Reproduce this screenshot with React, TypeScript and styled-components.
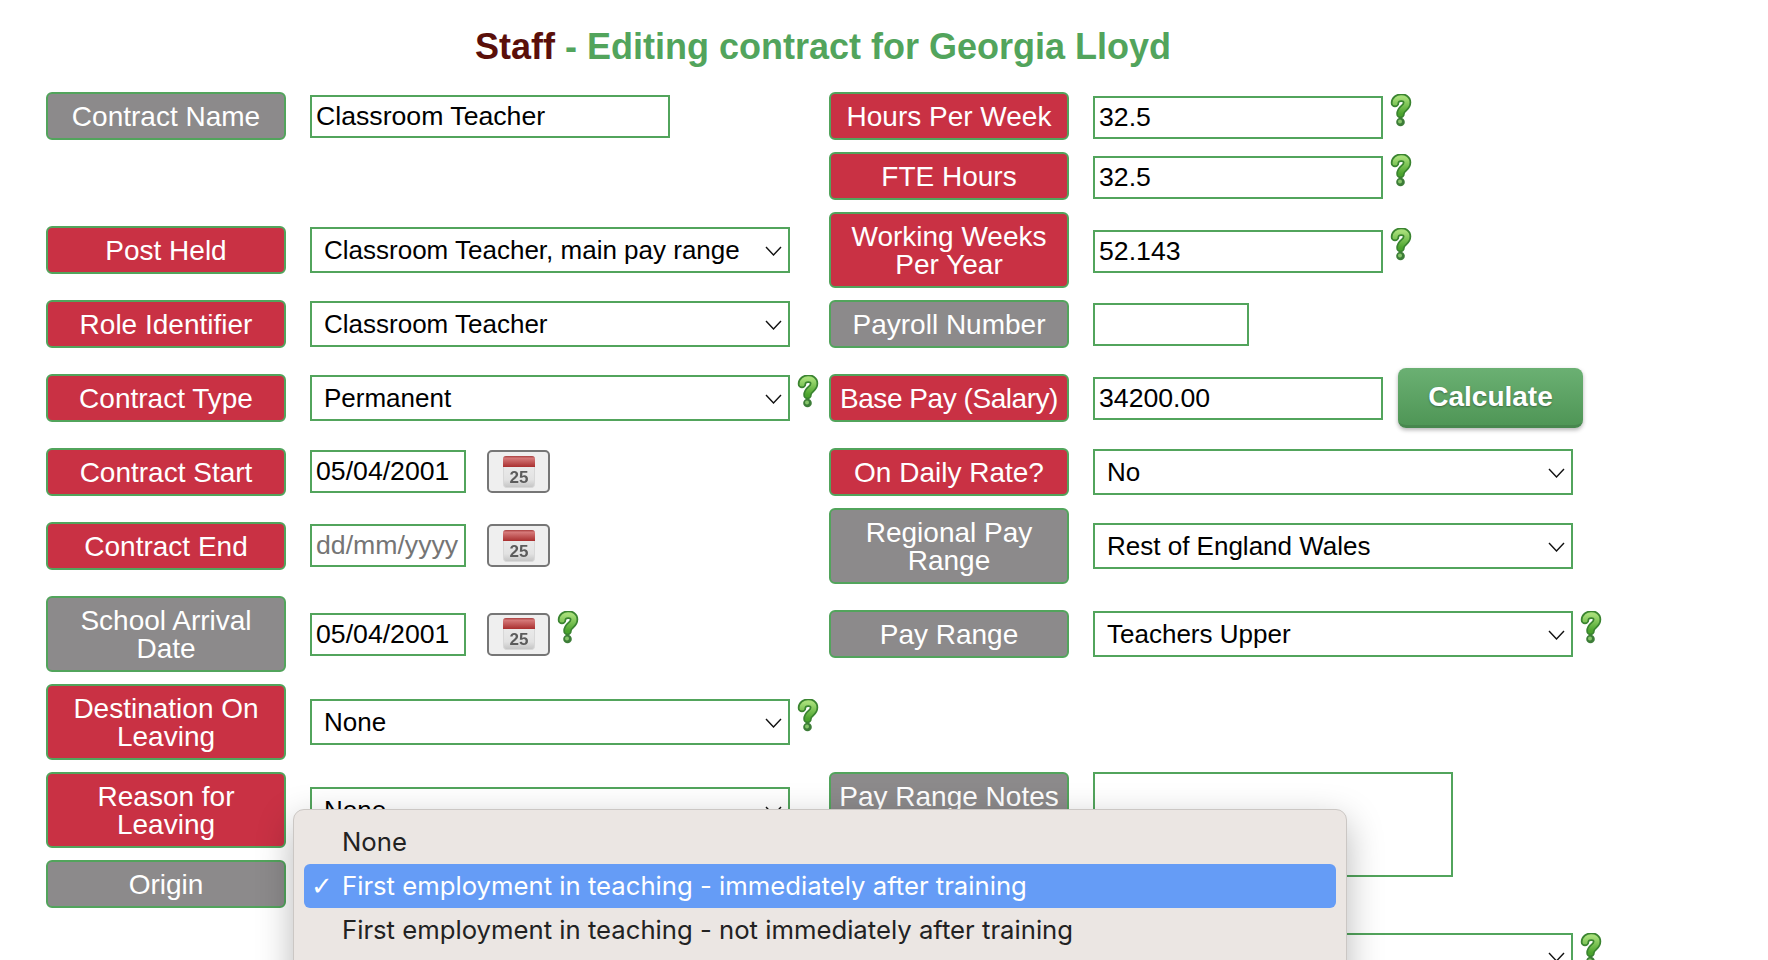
import styled, { createGlobalStyle } from 'styled-components'

const GlobalStyle = createGlobalStyle`
html, body {
  margin: 0;
  padding: 0;
  height: 960px;
  overflow: hidden;
  background: #fff;
  font-family: "Liberation Sans", Arial, sans-serif;
}
`

const green = '#52a45c'

const HelpIcon = ({ lift = 0 }: { lift?: number }) => (
  <HelpMark $lift={lift} width="22" height="33" viewBox="0 0 22 33">
    <defs>
      <linearGradient id="helpFill" x1="0" y1="0" x2="0" y2="1">
        <stop offset="0" stopColor="#a6de78" />
        <stop offset="1" stopColor="#4aa32c" />
      </linearGradient>
    </defs>
    <path d="M5 9C5 2.500 17 1.500 17 8.500c0 6-6.500 5.500-6.500 11.500" fill="none" stroke="#3a8430" strokeWidth="8.500" strokeLinecap="round" />
    <path d="M5 9C5 2.500 17 1.500 17 8.500c0 6-6.500 5.500-6.500 11.500" fill="none" stroke="url(#helpFill)" strokeWidth="5" strokeLinecap="round" />
    <circle cx="10.500" cy="28" r="4.300" fill="#3d7d38" />
    <circle cx="10" cy="27.500" r="2" fill="#86c56a" />
  </HelpMark>
)

const CalendarIcon = () => (
  <svg width="32" height="32" viewBox="0 0 32 32">
    <defs>
      <linearGradient id="calTop" x1="0" y1="0" x2="0" y2="1">
        <stop offset="0" stopColor="#a83d3d" />
        <stop offset="0.2" stopColor="#d67a7a" />
        <stop offset="1" stopColor="#a92f2f" />
      </linearGradient>
      <linearGradient id="calBody" x1="0" y1="0" x2="0" y2="1">
        <stop offset="0" stopColor="#f0f0f0" />
        <stop offset="0.75" stopColor="#e2e2e2" />
        <stop offset="1" stopColor="#c4c4c4" />
      </linearGradient>
      <filter id="calBlur">
        <feGaussianBlur stdDeviation="0.45" />
      </filter>
    </defs>
    <rect x="0.500" y="0.500" width="31" height="31" rx="3" fill="url(#calBody)" stroke="#d8d8d8" />
    <path d="M0 3a3 3 0 0 1 3-3h26a3 3 0 0 1 3 3V11H0z" fill="url(#calTop)" />
    <text x="16" y="27" textAnchor="middle" fontFamily='"Liberation Sans", sans-serif' fontWeight="700" fontSize="17" fill="#5c5c5c" filter="url(#calBlur)">25</text>
  </svg>
)

const Chevron = () => (
  <ChevronMark width="17" height="10" viewBox="0 0 17 10">
    <polyline points="1,1 8.500,9 16,1" fill="none" stroke="#111" strokeWidth="1.400" />
  </ChevronMark>
)

const SelectBox = ({ value = '' }: { value?: string }) => (
  <SelectWrap>
    <Select defaultValue={value}>
      <option value={value}>{value}</option>
    </Select>
    <Chevron />
  </SelectWrap>
)

const DatePicker = () => (
  <CalendarButton type="button">
    <CalendarIcon />
  </CalendarButton>
)

export default function App() {
  return (
    <Page>
      <GlobalStyle />
      <Title>
        <span>Staff</span> - Editing contract for Georgia Lloyd
      </Title>
      <FormGrid>
        <Label>Contract Name</Label>
        <Field><TextInput $width={360} defaultValue="Classroom Teacher" /></Field>
        <Label $required>Hours Per Week</Label>
        <LowField><TextInput $width={290} defaultValue="32.5" /><HelpIcon lift={2} /></LowField>

        <div />
        <div />
        <Label $required>FTE Hours</Label>
        <LowField><TextInput $width={290} defaultValue="32.5" /><HelpIcon lift={2} /></LowField>

        <Label $required>Post Held</Label>
        <Field><SelectBox value="Classroom Teacher, main pay range" /></Field>
        <Label $required>Working Weeks<br />Per Year</Label>
        <LowField><TextInput $width={290} defaultValue="52.143" /><HelpIcon lift={2} /></LowField>

        <Label $required>Role Identifier</Label>
        <Field><SelectBox value="Classroom Teacher" /></Field>
        <Label>Payroll Number</Label>
        <Field><TextInput $width={156} /></Field>

        <Label $required>Contract Type</Label>
        <Field><SelectBox value="Permanent" /><HelpIcon /></Field>
        <TightLabel $required>Base Pay (Salary)</TightLabel>
        <Field>
          <TextInput $width={290} defaultValue="34200.00" />
          <CalculateButton type="button">Calculate</CalculateButton>
        </Field>

        <Label $required>Contract Start</Label>
        <HighField><TextInput $width={156} defaultValue="05/04/2001" /><DatePicker /></HighField>
        <Label $required>On Daily Rate?</Label>
        <Field><SelectBox value="No" /></Field>

        <Label $required>Contract End</Label>
        <HighField><TextInput $width={156} placeholder="dd/mm/yyyy" /><DatePicker /></HighField>
        <Label>Regional Pay<br />Range</Label>
        <Field><SelectBox value="Rest of England Wales" /></Field>

        <Label>School Arrival<br />Date</Label>
        <Field><TextInput $width={156} defaultValue="05/04/2001" /><DatePicker /><HelpIcon lift={2} /></Field>
        <Label>Pay Range</Label>
        <Field><SelectBox value="Teachers Upper" /><HelpIcon /></Field>

        <Label $required>Destination On<br />Leaving</Label>
        <Field><SelectBox value="None" /><HelpIcon /></Field>
        <div />
        <div />

        <Label $required>Reason for<br />Leaving</Label>
        <Field><SelectBox value="None" /></Field>
        <TopLabel>Pay Range Notes</TopLabel>
        <NotesField><Notes /></NotesField>

        <Label>Origin</Label>
        <Field />
        <div />

        <div />
        <div />
        <div />
        <LastField><SelectBox /><HelpIcon /></LastField>
      </FormGrid>

      <DropdownMenu>
        <MenuItem>None</MenuItem>
        <MenuItem $selected>
          <CheckMark>✓</CheckMark>
          First employment in teaching - immediately after training
        </MenuItem>
        <MenuItem>First employment in teaching - not immediately after training</MenuItem>
      </DropdownMenu>
    </Page>
  )
}

const Page = styled.div`
  position: relative;
  height: 960px;
  overflow: hidden;
`

const Title = styled.h1`
  margin: 0;
  width: 1646px;
  height: 92px;
  line-height: 94px;
  font-size: 36px;
  font-weight: 700;
  text-align: center;
  color: ${green};

  span {
    color: #5a0f0a;
  }
`

const FormGrid = styled.div`
  display: grid;
  grid-template-columns: 240px 543px 240px 1fr;
  row-gap: 12px;
  align-items: center;
  padding-left: 46px;
`

const Label = styled.div<{ $required?: boolean }>`
  box-sizing: border-box;
  padding: 9px 0 7px;
  border: 2px solid ${green};
  border-radius: 6px;
  background: ${(p) => (p.$required ? '#c93144' : '#8c8a8b')};
  color: #fff;
  font-size: 28px;
  line-height: 28px;
  text-align: center;
  white-space: nowrap;
`

const TightLabel = styled(Label)`
  letter-spacing: -0.45px;
`

const TopLabel = styled(Label)`
  align-self: start;
`

const Field = styled.div`
  display: flex;
  align-items: center;
  padding-left: 24px;
`

const LowField = styled(Field)`
  margin-top: 2px;
`

const HighField = styled(Field)`
  margin-bottom: 1px;
`

const NotesField = styled(Field)`
  grid-row: span 2;
  align-self: start;
`

const LastField = styled(Field)`
  align-self: start;
  margin-top: 13px;
`

const TextInput = styled.input<{ $width: number }>`
  box-sizing: border-box;
  width: ${(p) => p.$width}px;
  height: 43px;
  padding: 0 4px;
  border: 2px solid ${green};
  border-radius: 0;
  outline: none;
  background: #fff;
  color: #000;
  font-family: inherit;
  font-size: 26.67px;

  &::placeholder {
    color: #757575;
    opacity: 1;
  }
`

const SelectWrap = styled.div`
  position: relative;
  width: 480px;
  height: 46px;
`

const Select = styled.select`
  box-sizing: border-box;
  width: 100%;
  height: 100%;
  padding: 0 30px 0 12px;
  border: 2px solid ${green};
  border-radius: 0;
  outline: none;
  appearance: none;
  background: #fff;
  color: #000;
  font-family: inherit;
  font-size: 26px;
`

const ChevronMark = styled.svg`
  position: absolute;
  top: 19px;
  right: 8px;
  pointer-events: none;
`

const HelpMark = styled.svg<{ $lift: number }>`
  flex: none;
  align-self: flex-start;
  margin-top: ${(p) => -p.$lift}px;
  margin-left: 7px;
`

const CalendarButton = styled.button`
  box-sizing: border-box;
  display: flex;
  align-items: center;
  justify-content: center;
  width: 63px;
  height: 43px;
  margin-left: 21px;
  padding: 0;
  border: 2px solid #767676;
  border-radius: 5px;
  background: #efefef;
`

const CalculateButton = styled.button`
  box-sizing: border-box;
  width: 185px;
  height: 60px;
  margin: 8px 0 8px 15px;
  border: none;
  border-bottom: 3px solid #47874e;
  border-radius: 8px;
  background: linear-gradient(#6bb073, #4f9656);
  box-shadow: 0 2px 4px rgba(0, 0, 0, 0.3);
  color: #fff;
  font-family: inherit;
  font-size: 28px;
  font-weight: 700;
  text-shadow: 0 1px 2px rgba(0, 0, 0, 0.35);
`

const Notes = styled.textarea`
  box-sizing: border-box;
  display: block;
  width: 360px;
  height: 105px;
  border: 2px solid ${green};
  border-radius: 0;
  outline: none;
  resize: none;
`

const DropdownMenu = styled.div`
  position: absolute;
  top: 809px;
  left: 293px;
  box-sizing: border-box;
  width: 1054px;
  height: 260px;
  padding: 10px;
  border: 1px solid #cbc7c4;
  border-radius: 11px;
  background: #ebe6e3;
  box-shadow: 0 12px 36px rgba(0, 0, 0, 0.28);
  font-family: Inter, "Liberation Sans", sans-serif;
`

const MenuItem = styled.div<{ $selected?: boolean }>`
  position: relative;
  height: 44px;
  padding-left: 38px;
  border-radius: 6px;
  background: ${(p) => (p.$selected ? '#659cf6' : 'transparent')};
  color: ${(p) => (p.$selected ? '#fff' : '#222')};
  font-size: 25.7px;
  line-height: 44px;
  white-space: nowrap;
`

const CheckMark = styled.span`
  position: absolute;
  left: 7px;
  font-family: "DejaVu Sans", sans-serif;
  font-size: 26px;
  font-weight: 700;
`
